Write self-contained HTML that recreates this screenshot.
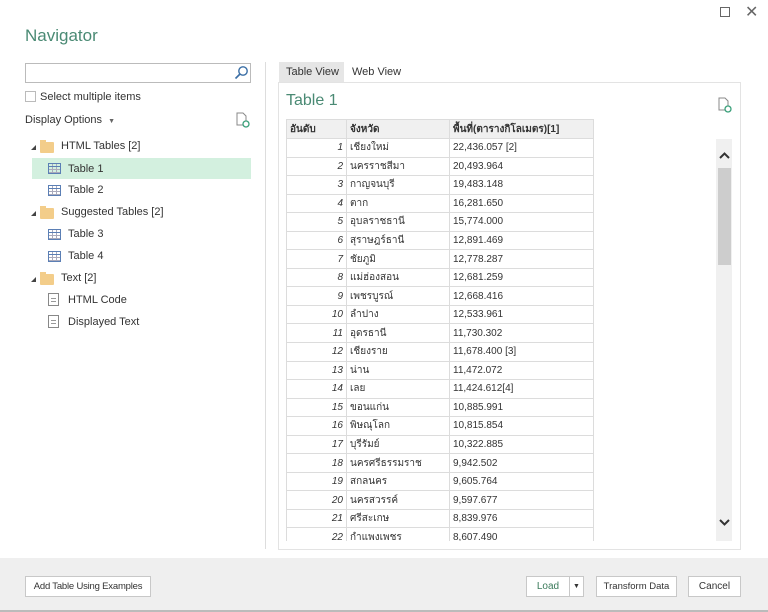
<!DOCTYPE html>
<html><head><meta charset="utf-8"><style>
*{margin:0;padding:0;box-sizing:border-box}
body{width:768px;height:612px;background:#fff;font-family:"Liberation Sans","Noto Sans CJK SC",sans-serif;font-size:11px;color:#333;position:relative;overflow:hidden}
.a{position:absolute}
.t{position:absolute;white-space:nowrap}
.btn{position:absolute;background:#fff;border:1px solid #c8c8c8;font-size:10px;text-align:center;line-height:19px;color:#333;white-space:nowrap;overflow:hidden}
table{border-collapse:collapse;position:absolute;left:286px;top:120px;font-size:10px}
td{border:1px solid #dcdcdc;height:18.55px;padding:0 3px;white-space:nowrap;color:#333}
td.n{text-align:right;font-style:italic;width:60px}
td.p{width:103px}
td.v{width:144px}
tr.h td{background:#f0f0f0;font-weight:bold;height:19px}
.tbl{position:absolute;width:13px;height:11px;border:1px solid #5b7fb5;background:
linear-gradient(#5b7fb5,#5b7fb5) 0 2px/100% 1px no-repeat,
repeating-linear-gradient(90deg,transparent 0 3px,#aab 3px 4px),
repeating-linear-gradient(180deg,transparent 0 2px,#aab 2px 3px);}
.fold{position:absolute;width:14px;height:11px;background:#f3cd8a;border-radius:1px}
.fold:before{content:"";position:absolute;left:0;top:-2px;width:6px;height:3px;background:#f3cd8a}
.doc{position:absolute;width:11px;height:13px;border:1px solid #888;background:repeating-linear-gradient(180deg,transparent 0 2px,#999 2px 3px) 2px 2px/5px 8px no-repeat}
.tri{position:absolute;width:0;height:0;border-left:5px solid transparent;border-bottom:5px solid #444}
</style></head><body>
<div class="t" style="left:25px;top:26px;font-size:17px;color:#4a8a74">Navigator</div>
<div class="a" style="left:720px;top:7px;width:10px;height:10px;border:1px solid #666"></div>
<div class="t" style="left:745px;top:2px;font-size:16px;color:#666">✕</div>

<div class="a" style="left:25px;top:63px;width:226px;height:20px;border:1px solid #bbb"></div>
<svg class="a" style="left:234px;top:65px" width="15" height="15"><circle cx="9" cy="6" r="4.2" fill="none" stroke="#3a6ea5" stroke-width="1.4"/><line x1="6" y1="9" x2="1.5" y2="13.5" stroke="#3a6ea5" stroke-width="1.6"/></svg>
<div class="a" style="left:25px;top:91px;width:11px;height:11px;border:1px solid #bbb"></div>
<div class="t" style="left:40px;top:91px">Select multiple items</div>
<div class="t" style="left:25px;top:114px">Display Options &nbsp;<span style="font-size:7px;color:#666">▼</span></div>
<svg class="a" style="left:236px;top:112px" width="14" height="16"><path d="M1 1H7L10 4V13H1Z" fill="#fff" stroke="#888"/><circle cx="10" cy="12" r="3" fill="#fff" stroke="#3aa07a" stroke-width="1.3"/></svg>

<div class="tri" style="left:31px;top:145px"></div><div class="fold" style="left:40px;top:142px"></div><div class="t" style="left:61px;top:140px">HTML Tables [2]</div>
<div class="a" style="left:32px;top:158px;width:219px;height:21px;background:#d3f0df"></div>
<div class="tbl" style="left:48px;top:163px"></div><div class="t" style="left:68px;top:163px">Table 1</div>
<div class="tbl" style="left:48px;top:185px"></div><div class="t" style="left:68px;top:184px">Table 2</div>
<div class="tri" style="left:31px;top:211px"></div><div class="fold" style="left:40px;top:208px"></div><div class="t" style="left:61px;top:206px">Suggested Tables [2]</div>
<div class="tbl" style="left:48px;top:229px"></div><div class="t" style="left:68px;top:228px">Table 3</div>
<div class="tbl" style="left:48px;top:251px"></div><div class="t" style="left:68px;top:250px">Table 4</div>
<div class="tri" style="left:31px;top:277px"></div><div class="fold" style="left:40px;top:274px"></div><div class="t" style="left:61px;top:272px">Text [2]</div>
<div class="doc" style="left:48px;top:293px"></div><div class="t" style="left:68px;top:294px">HTML Code</div>
<div class="doc" style="left:48px;top:315px"></div><div class="t" style="left:68px;top:316px">Displayed Text</div>

<div class="a" style="left:265px;top:62px;width:1px;height:487px;background:#ddd"></div>
<div class="a" style="left:279px;top:62px;width:65px;height:20px;background:#e6e6e6"></div>
<div class="t" style="left:286px;top:66px">Table View</div>
<div class="t" style="left:352px;top:66px">Web View</div>
<div class="a" style="left:278px;top:82px;width:463px;height:468px;border:1px solid #e3e3e3"></div>
<div class="t" style="left:286px;top:92px;font-size:16px;color:#4a8a74">Table 1</div>
<svg class="a" style="left:718px;top:97px" width="14" height="16"><path d="M1 1H7L10 4V13H1Z" fill="#fff" stroke="#888"/><circle cx="10" cy="12" r="3" fill="#fff" stroke="#3aa07a" stroke-width="1.3"/></svg>

<div class="a" style="left:280px;top:119px;width:420px;height:422px;overflow:hidden">
<table style="left:6px;top:0">
<tr class="h"><td style="width:60px">อันดับ</td><td class="p">จังหวัด</td><td class="v">พื้นที่(ตารางกิโลเมตร)[1]</td></tr>
<tr><td class="n">1</td><td>เชียงใหม่</td><td>22,436.057 [2]</td></tr>
<tr><td class="n">2</td><td>นครราชสีมา</td><td>20,493.964</td></tr>
<tr><td class="n">3</td><td>กาญจนบุรี</td><td>19,483.148</td></tr>
<tr><td class="n">4</td><td>ตาก</td><td>16,281.650</td></tr>
<tr><td class="n">5</td><td>อุบลราชธานี</td><td>15,774.000</td></tr>
<tr><td class="n">6</td><td>สุราษฎร์ธานี</td><td>12,891.469</td></tr>
<tr><td class="n">7</td><td>ชัยภูมิ</td><td>12,778.287</td></tr>
<tr><td class="n">8</td><td>แม่ฮ่องสอน</td><td>12,681.259</td></tr>
<tr><td class="n">9</td><td>เพชรบูรณ์</td><td>12,668.416</td></tr>
<tr><td class="n">10</td><td>ลำปาง</td><td>12,533.961</td></tr>
<tr><td class="n">11</td><td>อุดรธานี</td><td>11,730.302</td></tr>
<tr><td class="n">12</td><td>เชียงราย</td><td>11,678.400 [3]</td></tr>
<tr><td class="n">13</td><td>น่าน</td><td>11,472.072</td></tr>
<tr><td class="n">14</td><td>เลย</td><td>11,424.612[4]</td></tr>
<tr><td class="n">15</td><td>ขอนแก่น</td><td>10,885.991</td></tr>
<tr><td class="n">16</td><td>พิษณุโลก</td><td>10,815.854</td></tr>
<tr><td class="n">17</td><td>บุรีรัมย์</td><td>10,322.885</td></tr>
<tr><td class="n">18</td><td>นครศรีธรรมราช</td><td>9,942.502</td></tr>
<tr><td class="n">19</td><td>สกลนคร</td><td>9,605.764</td></tr>
<tr><td class="n">20</td><td>นครสวรรค์</td><td>9,597.677</td></tr>
<tr><td class="n">21</td><td>ศรีสะเกษ</td><td>8,839.976</td></tr>
<tr><td class="n">22</td><td>กำแพงเพชร</td><td>8,607.490</td></tr>
<tr><td class="n">23</td><td>ร้อยเอ็ด</td><td>8,299.449</td></tr>
</table></div>

<div class="a" style="left:716px;top:139px;width:16px;height:402px;background:#f0f0f0"></div>
<div class="a" style="left:718px;top:168px;width:13px;height:97px;background:#cdcdcd"></div>
<svg class="a" style="left:718px;top:151px" width="13" height="10"><path d="M2 7L6.5 2.5L11 7" fill="none" stroke="#333" stroke-width="2"/></svg>
<svg class="a" style="left:718px;top:517px" width="13" height="10"><path d="M2 3L6.5 7.5L11 3" fill="none" stroke="#333" stroke-width="2"/></svg>

<div class="a" style="left:0;top:558px;width:768px;height:54px;background:#efefef;border-bottom:2px solid #bbb"></div>
<div class="btn" style="left:25px;top:576px;width:126px;height:21px;font-size:9.5px;letter-spacing:-0.2px">Add Table Using Examples</div>
<div class="btn" style="left:526px;top:576px;width:44px;height:21px;color:#3a7a5a">Load</div>
<div class="btn" style="left:569px;top:576px;width:15px;height:21px;font-size:7px">▼</div>
<div class="btn" style="left:596px;top:576px;width:81px;height:21px;font-size:9.5px">Transform Data</div>
<div class="btn" style="left:688px;top:576px;width:53px;height:21px">Cancel</div>
</body></html>
